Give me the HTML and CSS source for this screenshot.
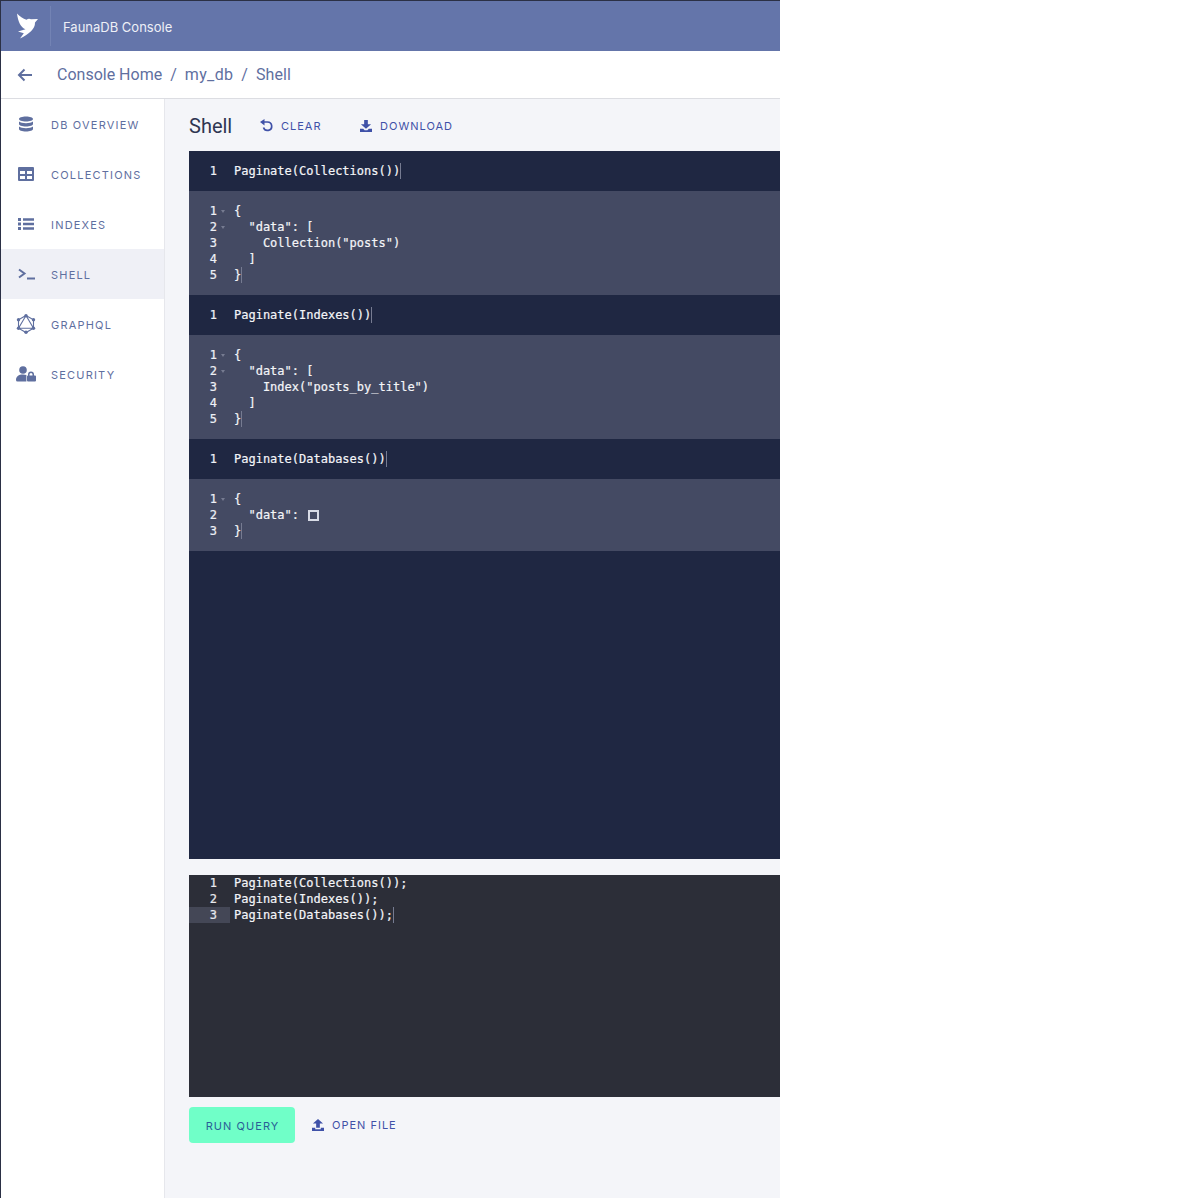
FILE: index.html
```html
<!DOCTYPE html>
<html lang="en">
<head>
<meta charset="utf-8">
<title>FaunaDB Console</title>
<link rel="stylesheet" href="styles.css">
</head>
<body>
<div class="app">
  <header class="topbar">
    <div class="logo-cell">
      <svg class="logo" viewBox="0 0 22 26" width="22" height="26"><path fill="#fff" d="M1 .5C3.500 3.500 7 5.500 10.500 6.800 12 5.600 13.500 5.500 15 6.300L22 6 19 9.600C19.200 13 17.500 16 15 18.300 12 21.200 8 23.800 4 25.600L7.800 20.200 2 18.600 9.500 16.300C5 14.500 2 9 1 .5Z"/></svg>
    </div>
    <div class="app-name">FaunaDB Console</div>
  </header>
  <nav class="crumbs">
    <svg class="back" viewBox="0 0 16 14" width="16" height="14"><path fill="none" stroke="#5f6f9f" stroke-width="2" d="M15 7H2M7.500 1.500 2 7l5.500 5.500"/></svg>
    <span>Console Home</span><span class="sep">/</span><span class="crumb-db">my_db</span><span class="sep">/</span><span class="crumb-leaf">Shell</span>
  </nav>
  <div class="body">
    <aside class="side">
      <a class="item">
        <svg viewBox="0 0 16 16" width="16" height="16"><path d="M1 3c0-1.500 3-2.500 7-2.500s7 1 7 2.500-3 2.500-7 2.500S1 4.500 1 3ZM1 5.600C2.500 6.900 5 7.300 8 7.300s5.500-.4 7-1.700V8c0 1.500-3 2.500-7 2.500S1 9.500 1 8ZM1 10.600c1.500 1.300 4 1.700 7 1.700s5.500-.4 7-1.700V13c0 1.500-3 2.500-7 2.500S1 14.500 1 13Z"/></svg>
        <span>DB OVERVIEW</span>
      </a>
      <a class="item">
        <svg viewBox="0 0 16 14" width="16" height="14"><path fill-rule="evenodd" d="M1 0h14a1 1 0 0 1 1 1v12a1 1 0 0 1-1 1H1a1 1 0 0 1-1-1V1a1 1 0 0 1 1-1ZM2 4v3h5V4Zm7 0v3h5V4ZM2 9v3h5V9Zm7 0v3h5V9Z"/></svg>
        <span>COLLECTIONS</span>
      </a>
      <a class="item">
        <svg viewBox="0 0 16 14" width="16" height="14"><path d="M0 1h3v3H0ZM5 1.300h11v2.400H5ZM0 5.500h3v3H0ZM5 5.800h11v2.400H5ZM0 10h3v3H0ZM5 10.300h11v2.400H5Z"/></svg>
        <span>INDEXES</span>
      </a>
      <a class="item active">
        <svg viewBox="0 0 17 12" width="17" height="12"><path fill="none" stroke="#5f6f9f" stroke-width="2" d="M1 1.500 6.500 5.500 1 9.500"/><path d="M9 9.500h8v2H9Z"/></svg>
        <span>SHELL</span>
      </a>
      <a class="item">
        <svg class="wide" viewBox="0 0 20 20" width="20" height="20"><path fill="none" stroke="#5f6f9f" stroke-width="1.100" d="M10 1.500 17.500 5.800V14.200L10 18.500 2.500 14.200V5.800ZM10 1.500 17.500 14.200H2.500Z"/><circle cx="10" cy="1.800" r="1.700"/><circle cx="17.500" cy="5.800" r="1.700"/><circle cx="17.500" cy="14.200" r="1.700"/><circle cx="10" cy="18.200" r="1.700"/><circle cx="2.500" cy="14.200" r="1.700"/><circle cx="2.500" cy="5.800" r="1.700"/></svg>
        <span>GRAPHQL</span>
      </a>
      <a class="item">
        <svg class="wide" viewBox="0 0 20 16" width="20" height="16"><circle cx="7" cy="4" r="3.800"/><path d="M0 14c0-3.500 2.500-5.500 7-5.500 1.300 0 2.500.2 3.400.5V15.500H1.500A1.500 1.500 0 0 1 0 14Z"/><path fill-rule="evenodd" d="M12 9.500V8.500a3 3 0 0 1 6 0v1h1a1 1 0 0 1 1 1v4a1 1 0 0 1-1 1h-7a1 1 0 0 1-1-1v-4a1 1 0 0 1 1-1Zm1.500 0h3V8.500a1.500 1.500 0 0 0-3 0Z"/></svg>
        <span>SECURITY</span>
      </a>
    </aside>
    <main class="main">
      <div class="title-row">
        <h1>Shell</h1>
        <a class="action clear">
          <svg viewBox="0 0 14 14" width="14" height="14"><path fill="none" stroke="#3f51a8" stroke-width="1.700" d="M4 3h4.500a4.200 4.200 0 1 1-4 5.500"/><path fill="#3f51a8" d="M5.500 0v6.500L1 3Z"/></svg>
          CLEAR
        </a>
        <a class="action download">
          <svg viewBox="0 0 13 13" width="12" height="12"><path fill="#3f51a8" d="M4.500 0h4v4.500H12L6.500 9.500 1 4.500h3.500ZM0 9.500h3.500L5 11h3l1.500-1.500H13V13H0Z"/></svg>
          DOWNLOAD
        </a>
      </div>
      <section class="pane">
        <div class="block input"><div class="gutter"><div>1</div></div><pre class="code">Paginate(Collections())<i class="caret"></i></pre></div>
        <div class="block output"><div class="gutter"><div class="fold">1</div><div class="fold">2</div><div>3</div><div>4</div><div>5</div></div><pre class="code">{
  "data": [
    Collection("posts")
  ]
}<i class="caret"></i></pre></div>
        <div class="block input"><div class="gutter"><div>1</div></div><pre class="code">Paginate(Indexes())<i class="caret"></i></pre></div>
        <div class="block output"><div class="gutter"><div class="fold">1</div><div class="fold">2</div><div>3</div><div>4</div><div>5</div></div><pre class="code">{
  "data": [
    Index("posts_by_title")
  ]
}<i class="caret"></i></pre></div>
        <div class="block input"><div class="gutter"><div>1</div></div><pre class="code">Paginate(Databases())<i class="caret"></i></pre></div>
        <div class="block output"><div class="gutter"><div class="fold">1</div><div>2</div><div>3</div></div><pre class="code">{
  "data": <span class="match">[]</span>
}<i class="caret"></i></pre></div>
      </section>
      <section class="editor">
        <div class="gutter"><div>1</div><div>2</div><div class="current">3</div></div>
        <pre class="code">Paginate(Collections());
Paginate(Indexes());
Paginate(Databases());<i class="caret"></i></pre>
      </section>
      <div class="foot">
        <button class="run">RUN QUERY</button>
        <a class="action open">
          <svg viewBox="0 0 13 13" width="12" height="12"><path fill="#3f51a8" d="M6.500 0 12 5H8.500v4.500h-4V5H1ZM0 9.500h3.500V11h6V9.500H13V13H0Z"/></svg>
          OPEN FILE
        </a>
      </div>
    </main>
  </div>
</div>
</body>
</html>
```
FILE: styles.css
```css
* { box-sizing: border-box; }
html, body { margin: 0; background: #fff; }
.app {
  width: 780px;
  height: 1198px;
  overflow: hidden;
  border-left: 1px solid #2b3045;
  display: flex;
  flex-direction: column;
  font-family: Inter, "Liberation Sans", sans-serif;
  background: #f4f5f9;
}
.topbar {
  height: 51px;
  flex: none;
  display: flex;
  align-items: center;
  background: #6475aa;
  border-top: 1px solid #2b3045;
  color: #eef0f7;
}
.logo-cell {
  width: 50px;
  height: 40px;
  display: flex;
  align-items: center;
  padding-left: 15px;
  border-right: 1px solid #7383b4;
}
.app-name { margin-left: 12px; padding-top: 1px; font-size: 13px; }
.crumbs {
  height: 48px;
  flex: none;
  display: flex;
  align-items: center;
  padding-left: 16px;
  background: #fff;
  border-bottom: 1px solid #dcdde2;
  color: #5f6f9f;
  font-family: Roboto, sans-serif;
  font-size: 16px;
}
.crumb-db { letter-spacing: 0.35px; }
.crumb-leaf { letter-spacing: 0.1px; }
.back { margin-right: 24px; }
.sep { margin: 0 8px; }
.body { flex: 1; display: flex; min-height: 0; }
.side {
  width: 164px;
  flex: none;
  background: #fff;
  border-right: 1px solid #e6e7ec;
}
.item {
  height: 50px;
  display: flex;
  align-items: center;
  padding-top: 2px;
  color: #5f6f9f;
  font-size: 11px;
  letter-spacing: 1.200px;
  position: relative;
  padding-left: 50px;
}
.item svg {
  position: absolute;
  left: 17px;
  top: 50%;
  transform: translateY(-50%);
  fill: #5f6f9f;
}
.item svg.wide { left: 15px; }
.item.active { background: #eff0f6; }
.main {
  flex: 1;
  min-width: 0;
  padding-left: 24px;
  display: flex;
  flex-direction: column;
}
.title-row {
  height: 52px;
  flex: none;
  display: flex;
  align-items: center;
  padding-top: 2px;
}
h1 {
  margin: 0;
  width: 70px;
  font-family: Roboto, sans-serif;
  font-size: 20px;
  font-weight: 400;
  color: #2f3552;
}
.action {
  display: flex;
  align-items: center;
  gap: 8px;
  color: #3f51a8;
  font-size: 11px;
  letter-spacing: 1px;
}
.clear { margin-right: 38.500px; }
.pane {
  height: 708px;
  flex: none;
  background: #1f2742;
}
.block { display: flex; padding: 12px 0; }
.input { background: #1f2742; }
.output { background: #444a63; }
.gutter {
  width: 45px;
  flex: none;
  font-family: "DejaVu Sans Mono", monospace;
  font-size: 12px;
  line-height: 16px;
  color: #eef0f6;
  -webkit-text-stroke: 0.2px currentColor;
}
.gutter > div {
  position: relative;
  padding-right: 17px;
  text-align: right;
}
.fold::after {
  content: "";
  position: absolute;
  left: 32px;
  top: 7px;
  border: 2.500px solid transparent;
  border-top: 3px solid #767b91;
  border-bottom: 0;
}
.code {
  margin: 0;
  font-family: "DejaVu Sans Mono", monospace;
  font-size: 12px;
  line-height: 16px;
  color: #f4f5f8;
  white-space: pre;
  -webkit-text-stroke: 0.2px currentColor;
}
.caret {
  display: inline-block;
  width: 1px;
  height: 16px;
  vertical-align: top;
  background: #767b91;
}
.match {
  display: inline-block;
  width: 11px;
  height: 11px;
  margin: 3px 1px 0 2px;
  border: 2px solid #d8dbe6;
  color: transparent;
  -webkit-text-stroke: 0;
  font-size: 5px;
  line-height: 7px;
  vertical-align: top;
}
.editor {
  height: 222px;
  flex: none;
  margin-top: 16px;
  display: flex;
  background: #2c2e38;
}
.editor .gutter div.current { background: #444756; }
.editor .gutter { color: #e8e9ee; }
.editor .gutter { width: 41px; margin-right: 4px; }
.editor .gutter > div { padding-right: 13px; }
.foot {
  margin-top: 10px;
  display: flex;
  align-items: center;
  gap: 17px;
}
.run {
  width: 106px;
  height: 36px;
  padding: 1px 0 0 1px;
  border: 0;
  border-radius: 4px;
  background: #70ffc8;
  color: #2a5f96;
  font-family: Inter, "Liberation Sans", sans-serif;
  font-size: 11px;
  letter-spacing: 1.050px;
}
```
